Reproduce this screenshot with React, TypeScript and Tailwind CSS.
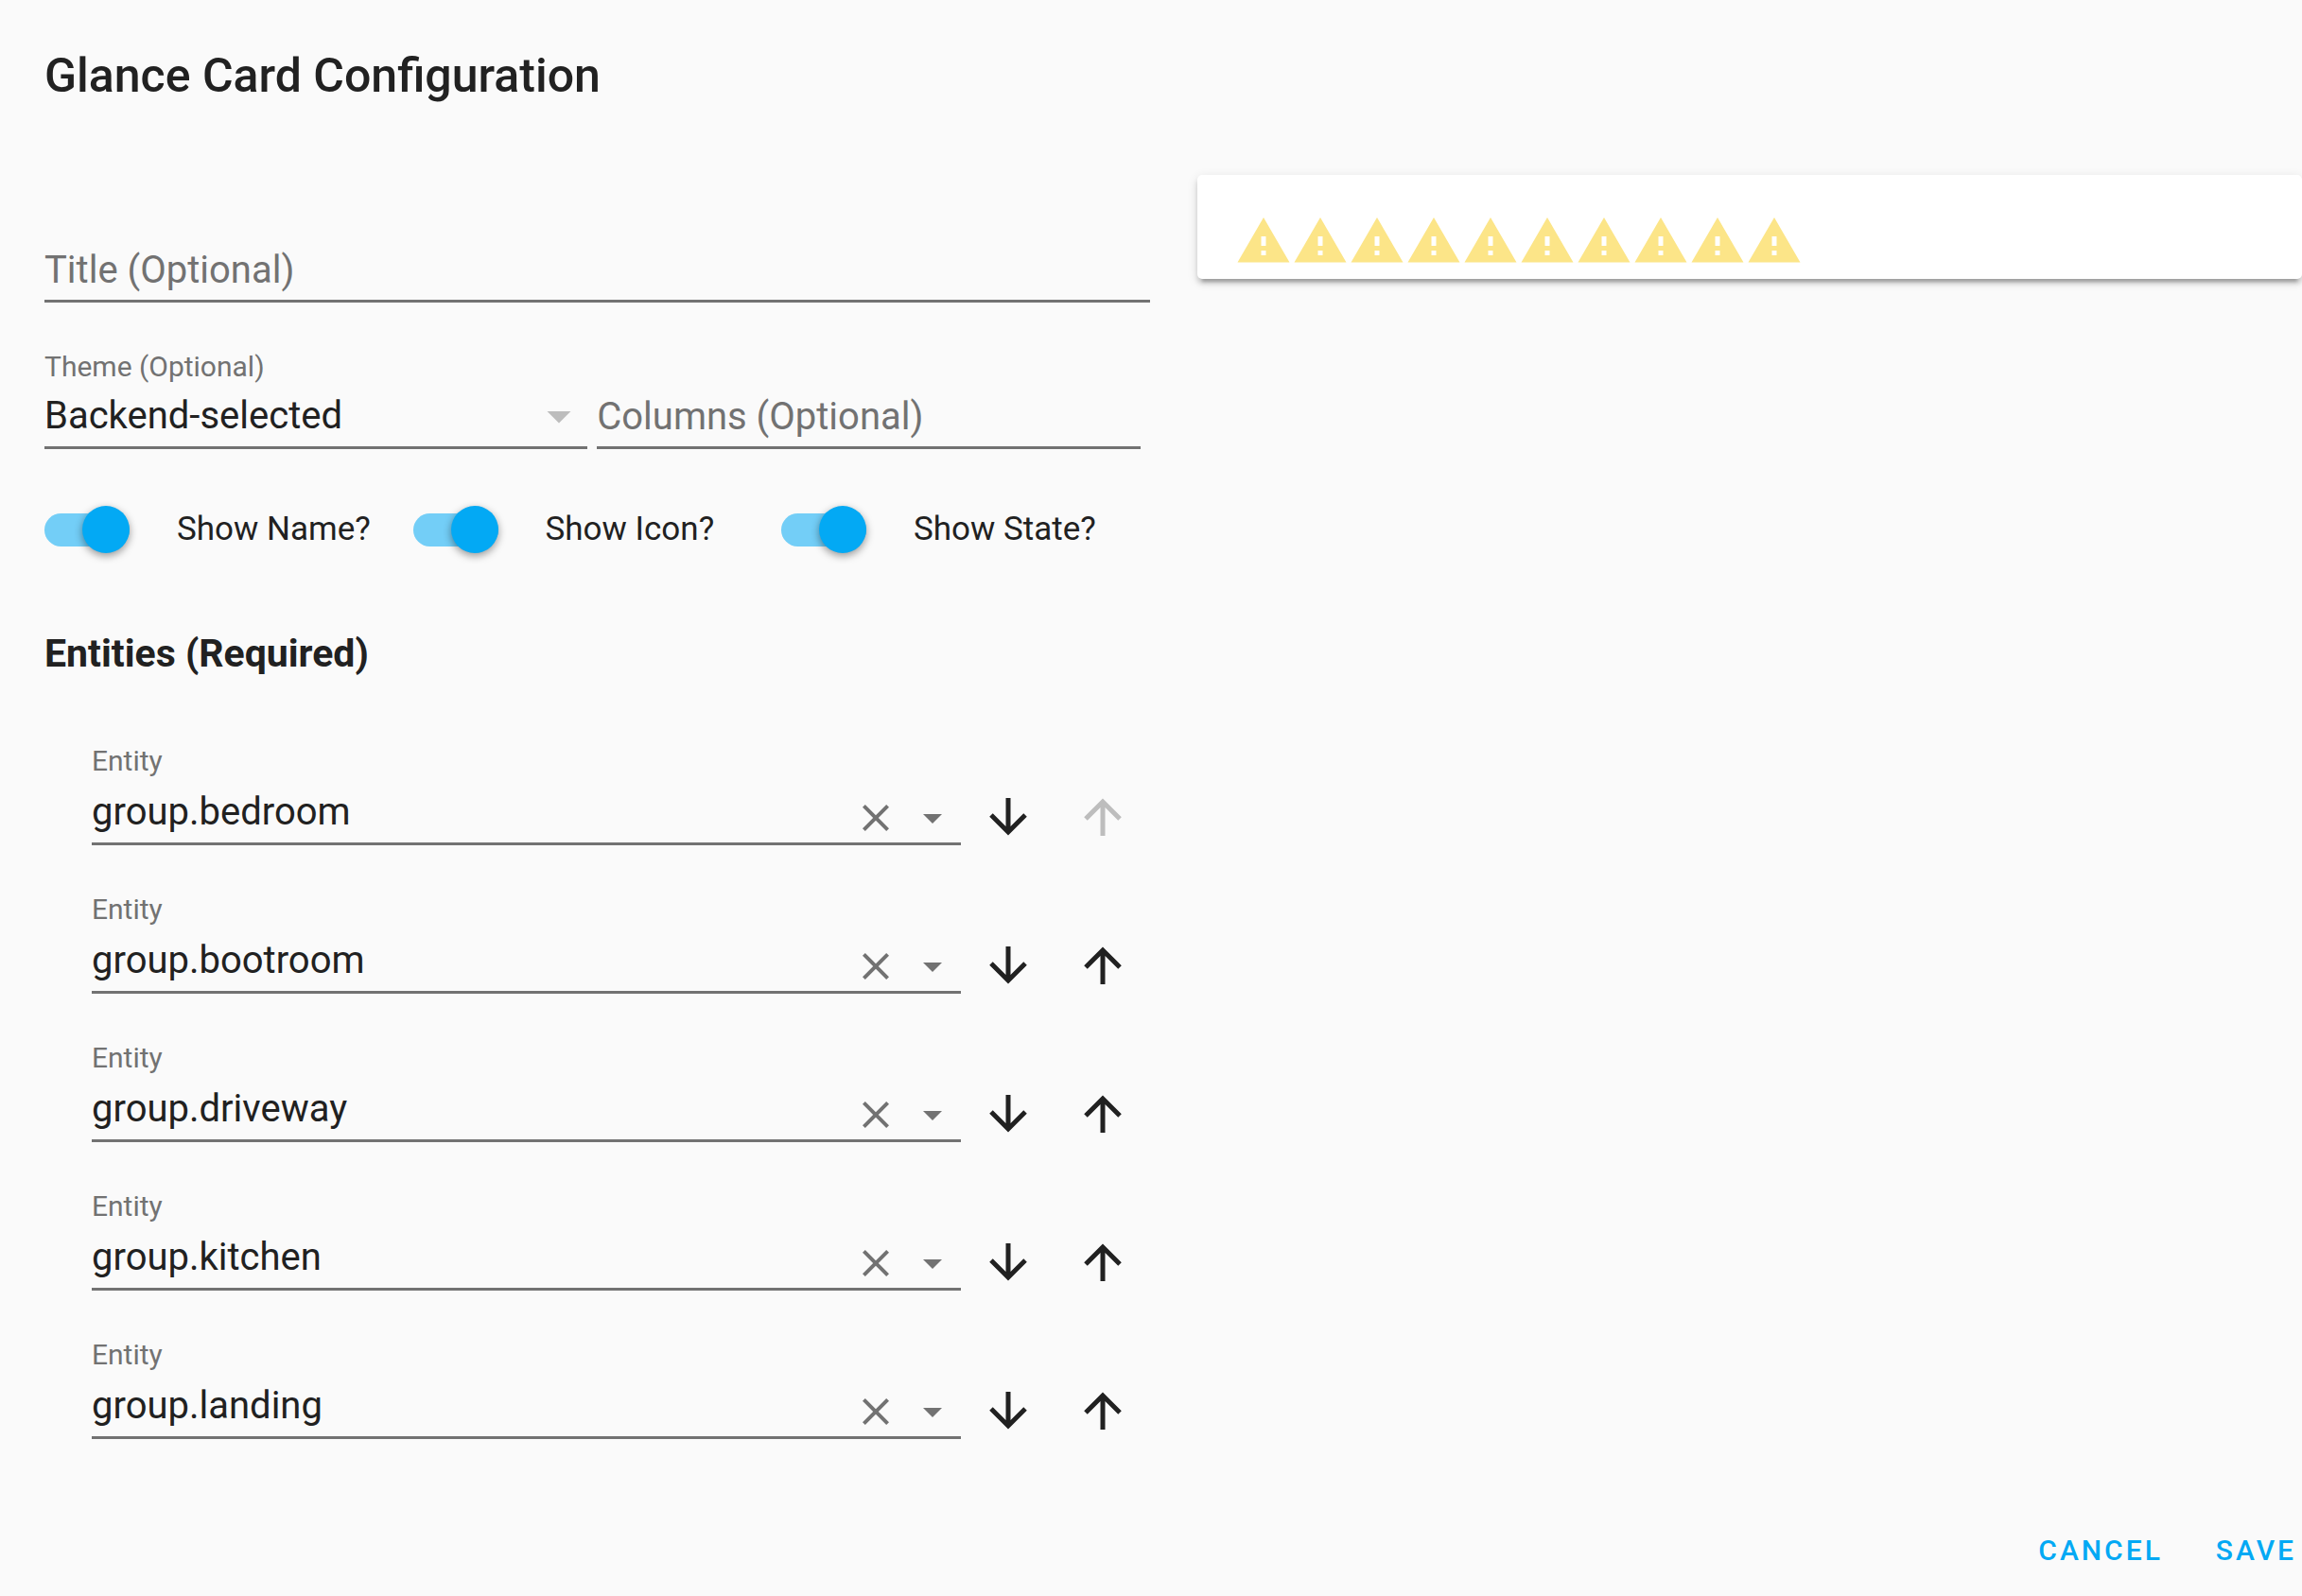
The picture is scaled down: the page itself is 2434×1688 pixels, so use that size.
import React, { useState } from 'react';

interface IconProps {
    path: string;
    className?: string;
}

const ICONS = {
    alert: 'M13,14H11V10H13M13,18H11V16H13M1,21H23L12,2L1,21Z',
    arrowDown: 'M11,4H13V16L18.5,10.5L19.92,11.92L12,19.84L4.08,11.92L5.5,10.5L11,16V4Z',
    arrowUp: 'M13,20H11V8L5.5,13.5L4.08,12.08L12,4.16L19.92,12.08L18.5,13.5L13,8V20Z',
    close: 'M19 6.41L17.59 5 12 10.59 6.41 5 5 6.41 10.59 12 5 17.59 6.41 19 12 13.41 17.59 19 19 17.59 13.41 12z',
    caret: 'M7 10l5 5 5-5z',
};

const ENTITIES = ['group.bedroom', 'group.bootroom', 'group.driveway', 'group.kitchen', 'group.landing'];

// One warning per entity in the group that could not be rendered
const WARNING_COUNT = 10;

function Icon({ path, className }: IconProps) {
    return (
        <svg viewBox="0 0 24 24" fill="currentColor" aria-hidden="true" className={className}>
            <path d={path} />
        </svg>
    );
}

// Text field whose label floats above once there is a value
function TextField({ id, label }: { id: string; label: string }) {
    const [value, setValue] = useState('');

    return (
        <div className="min-w-0 flex-1 border-b-3 border-[#727272]">
            <label htmlFor={id} className="block h-10 text-[30px] leading-10 text-[#727272]">
                {value && label}
            </label>
            <input
                id={id}
                type="text"
                aria-label={label}
                placeholder={label}
                value={value}
                onChange={(e) => setValue(e.target.value)}
                className="block h-16 w-full bg-transparent text-[40px] outline-none placeholder:text-[#727272]"
            />
        </div>
    );
}

function ThemeSelect() {
    return (
        <div className="min-w-0 flex-1 border-b-3 border-[#727272]">
            <label htmlFor="theme" className="block h-10 text-[30px] leading-10 text-[#727272]">
                Theme (Optional)
            </label>
            <div className="relative">
                <select id="theme" className="block h-16 w-full appearance-none bg-transparent text-[40px] outline-none">
                    <option>Backend-selected</option>
                </select>
                <Icon path={ICONS.caret} className="pointer-events-none absolute top-0.5 right-0 size-15 text-[#bdbdbd]" />
            </div>
        </div>
    );
}

function Toggle({ label }: { label: string }) {
    const [checked, setChecked] = useState(true);

    return (
        <label className="flex h-[50px] flex-1 cursor-pointer items-center gap-[50px] text-[35px] leading-[50px] whitespace-nowrap">
            <input
                type="checkbox"
                checked={checked}
                onChange={(e) => setChecked(e.target.checked)}
                className="relative h-[35px] w-[90px] shrink-0 appearance-none rounded-full bg-black/30 before:absolute before:-top-2 before:left-0 before:size-[50px] before:rounded-full before:bg-white before:shadow-[0_3px_8px_rgba(0,0,0,0.4)] before:content-[''] checked:bg-[#03a9f4]/55 checked:before:left-10 checked:before:bg-[#03a9f4]"
            />
            {label}
        </label>
    );
}

interface EntityRowProps {
    index: number;
    value: string;
    isFirst: boolean;
    onChange: (value: string) => void;
    onMove: (offset: number) => void;
}

function EntityRow({ index, value, isFirst, onChange, onMove }: EntityRowProps) {
    const id = `entity-${index}`;

    return (
        <li className="flex items-end">
            <div className="min-w-0 flex-1 border-b-3 border-[#727272]">
                <label htmlFor={id} className="block h-10 text-[30px] leading-10 text-[#727272]">
                    Entity
                </label>
                <div className="flex h-[66px] items-end text-[#727272]">
                    <input
                        id={id}
                        type="text"
                        value={value}
                        onChange={(e) => onChange(e.target.value)}
                        className="h-full min-w-0 flex-1 bg-transparent text-[40px] text-[#212121] outline-none"
                    />
                    <button type="button" aria-label="Clear" onClick={() => onChange('')} className="flex h-[52px] w-15 items-center justify-center">
                        <Icon path={ICONS.close} className="size-12" />
                    </button>
                    <button type="button" aria-label="Open list" className="flex h-[52px] w-15 items-center justify-center">
                        <Icon path={ICONS.caret} className="size-12" />
                    </button>
                </div>
            </div>
            <button type="button" aria-label="Move down" onClick={() => onMove(1)} className="flex w-25 justify-center">
                <Icon path={ICONS.arrowDown} className="size-15" />
            </button>
            <button
                type="button"
                aria-label="Move up"
                disabled={isFirst}
                onClick={() => onMove(-1)}
                className="flex w-25 justify-center disabled:text-[#bdbdbd]"
            >
                <Icon path={ICONS.arrowUp} className="size-15" />
            </button>
        </li>
    );
}

export default function App() {
    const [entities, setEntities] = useState(ENTITIES);

    const changeEntity = (index: number, value: string) => {
        setEntities(entities.map((entity, i) => (i === index ? value : entity)));
    };

    const moveEntity = (index: number, offset: number) => {
        const target = index + offset;
        if (target < 0 || target >= entities.length) return;

        const next = [...entities];
        [next[index], next[target]] = [next[target], next[index]];
        setEntities(next);
    };

    return (
        <div className="flex min-h-screen flex-col bg-[#fafafa] pt-[50px] pb-7 pl-[47px] font-[Roboto,sans-serif] text-[#212121]">
            <h1 className="text-[50px] leading-[60px] font-medium">Glance Card Configuration</h1>

            <main className="mt-[75px] grid grid-cols-2 items-start gap-[50px]">
                <form className="pt-7">
                    <div className="flex">
                        <TextField id="title" label="Title (Optional)" />
                    </div>
                    <div className="mt-12 flex gap-2.5 pr-2.5">
                        <ThemeSelect />
                        <TextField id="columns" label="Columns (Optional)" />
                    </div>
                    <div className="mt-15 flex">
                        <Toggle label="Show Name?" />
                        <Toggle label="Show Icon?" />
                        <Toggle label="Show State?" />
                    </div>

                    <h2 className="mt-19 text-[41px] leading-[60px] font-bold">Entities (Required)</h2>
                    <ul className="mt-16 flex flex-col gap-12 pl-[50px]">
                        {entities.map((entity, index) => (
                            <EntityRow
                                key={index}
                                index={index}
                                value={entity}
                                isFirst={index === 0}
                                onChange={(value) => changeEntity(index, value)}
                                onMove={(offset) => moveEntity(index, offset)}
                            />
                        ))}
                    </ul>
                </form>

                {/* Card preview */}
                <section className="flex flex-wrap rounded-[5px] bg-white px-10 pt-10 pb-2.5 text-[#fce588] shadow-[0_5px_5px_rgba(0,0,0,0.14),0_3px_12px_rgba(0,0,0,0.12),0_8px_3px_-5px_rgba(0,0,0,0.2)]">
                    {Array.from({ length: WARNING_COUNT }, (_, i) => (
                        <Icon key={i} path={ICONS.alert} className="size-15" />
                    ))}
                </section>
            </main>

            <footer className="mt-auto flex justify-end gap-14 pr-1.5 text-[30px] leading-10 font-medium tracking-widest text-[#03a9f4]">
                <button type="button">CANCEL</button>
                <button type="button">SAVE</button>
            </footer>
        </div>
    );
}
